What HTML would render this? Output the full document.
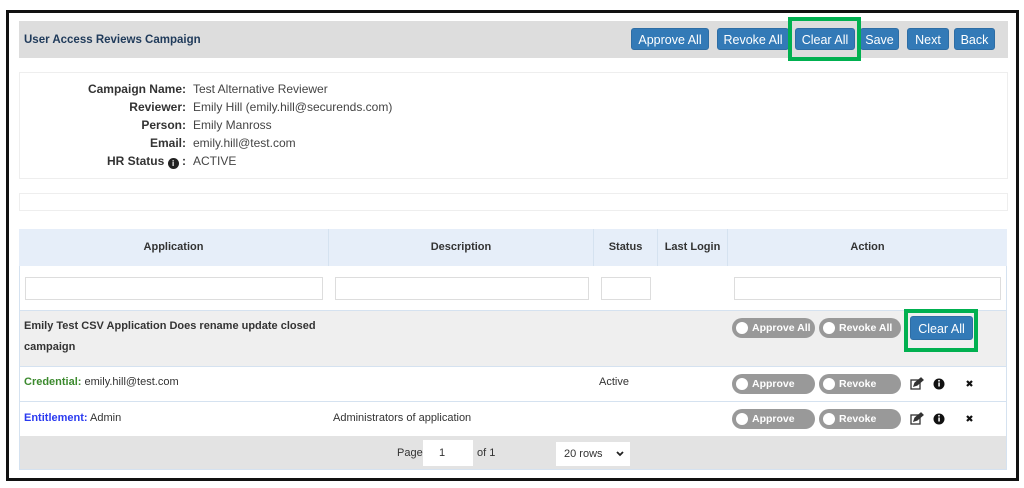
<!DOCTYPE html>
<html><head><style>
*{box-sizing:border-box;margin:0;padding:0}
body{width:1024px;height:488px;background:#fff;font-family:"Liberation Sans",sans-serif;font-size:12px;color:#333;position:relative;overflow:hidden}
.a{position:absolute}
.btn{position:absolute;background:#337ab7;color:#fff;border-radius:3px;font-size:12.5px;text-align:center;line-height:22px;height:22px;border:1px solid #2e6da4}
.g{position:absolute;border:4px solid #00b050}
.pill{position:absolute;background:#999;border-radius:11px;color:#fff;font-weight:bold;font-size:10.5px;line-height:20px;height:20px;padding-left:20px}
.pill:before{content:"";position:absolute;left:4px;top:4px;width:12px;height:12px;border-radius:50%;background:#fff}
.th{position:absolute;top:229px;height:37px;line-height:37px;text-align:center;font-weight:bold;font-size:11px;border-right:1px solid #d5e2f0}
.inp{position:absolute;background:#fff;border:1px solid #ddd;height:23px;top:277px}
.lab{position:absolute;right:838px;font-weight:bold;font-size:12px;color:#333}
.val{position:absolute;left:193px;font-size:12px;color:#444}
.hl{position:absolute;left:19px;width:988px;height:1px;background:#d5e2f0}
</style></head><body>
<div class="a" style="left:6px;top:10px;width:1013px;height:471px;border:3px solid #111"></div>
<div class="a" style="left:19px;top:21px;width:989px;height:37px;background:#ddd"></div>
<div class="a" style="left:24px;top:34px;font-weight:bold;font-size:11.5px;color:#1f3a5a">User Access Reviews Campaign</div>
<div class="btn" style="left:631px;top:28px;width:78px">Approve All</div>
<div class="btn" style="left:717px;top:28px;width:72px">Revoke All</div>
<div class="btn" style="left:795px;top:28px;width:60px">Clear All</div>
<div class="btn" style="left:860px;top:28px;width:39px">Save</div>
<div class="btn" style="left:907px;top:28px;width:42px">Next</div>
<div class="btn" style="left:954px;top:28px;width:41px">Back</div>
<div class="g" style="left:788px;top:17px;width:73px;height:44px"></div>

<div class="a" style="left:19px;top:72px;width:989px;height:107px;border:1px solid #eee"></div>
<div class="lab" style="top:82px">Campaign Name:</div><div class="val" style="top:82px">Test Alternative Reviewer</div>
<div class="lab" style="top:100px">Reviewer:</div><div class="val" style="top:100px">Emily Hill (emily.hill@securends.com)</div>
<div class="lab" style="top:118px">Person:</div><div class="val" style="top:118px">Emily Manross</div>
<div class="lab" style="top:136px">Email:</div><div class="val" style="top:136px">emily.hill@test.com</div>
<div class="lab" style="top:154px">HR Status <span style="display:inline-block;width:11px;height:11px;border-radius:50%;background:#222;color:#fff;font-size:8px;line-height:11px;text-align:center;vertical-align:-1px">i</span> :</div><div class="val" style="top:154px">ACTIVE</div>

<div class="a" style="left:19px;top:193px;width:989px;height:18px;border:1px solid #eee"></div>

<div class="a" style="left:19px;top:229px;width:988px;height:241px;border:1px solid #d5e2f0"></div>
<div class="a" style="left:19px;top:229px;width:988px;height:37px;background:#e6eef9"></div>
<div class="th" style="left:19px;width:310px">Application</div>
<div class="th" style="left:329px;width:265px">Description</div>
<div class="th" style="left:594px;width:64px">Status</div>
<div class="th" style="left:658px;width:70px">Last Login</div>
<div class="th" style="left:728px;width:279px;border:none">Action</div>
<div class="inp" style="left:25px;width:298px"></div>
<div class="inp" style="left:335px;width:254px"></div>
<div class="inp" style="left:601px;width:50px"></div>
<div class="inp" style="left:734px;width:267px"></div>
<div class="hl" style="top:310px"></div>
<div class="a" style="left:20px;top:311px;width:986px;height:55px;background:#efefef"></div>
<div class="a" style="left:24px;top:316px;width:300px;font-weight:bold;font-size:11px;line-height:21px;color:#333">Emily Test CSV Application Does rename update closed campaign</div>
<div class="pill" style="left:732px;top:318px;width:83px">Approve All</div>
<div class="pill" style="left:819px;top:318px;width:82px">Revoke All</div>
<div class="btn" style="left:910px;top:316px;width:63px;height:24px;line-height:24px">Clear All</div>
<div class="g" style="left:904px;top:309px;width:74px;height:43px"></div>
<div class="hl" style="top:366px"></div>
<div class="a" style="left:24px;top:376px;font-size:11px"><span style="color:#3c8a2e;font-weight:bold">Credential:</span> emily.hill@test.com</div>
<div class="a" style="left:599px;top:376px;font-size:11px">Active</div>
<div class="pill" style="left:732px;top:374px;width:83px">Approve</div>
<div class="pill" style="left:819px;top:374px;width:82px">Revoke</div>
<div class="hl" style="top:401px"></div>
<div class="a" style="left:24px;top:412px;font-size:11px"><span style="color:#2a3af0;font-weight:bold">Entitlement:</span> Admin</div>
<div class="a" style="left:333px;top:412px;font-size:11px">Administrators of application</div>
<div class="pill" style="left:732px;top:409px;width:83px">Approve</div>
<div class="pill" style="left:819px;top:409px;width:82px">Revoke</div>
<svg class="a" style="left:910px;top:377px" width="64" height="48" viewBox="0 0 64 48">
<g fill="none" stroke="#333" stroke-width="1.3"><rect x="1" y="3" width="9" height="9"/><path d="M4 9l1-3 6-5 2 2-6 5z" fill="#333"/></g>
<circle cx="29" cy="7" r="5.5" fill="#111"/><rect x="28.3" y="5.5" width="1.5" height="4" fill="#fff"/><circle cx="29" cy="3.8" r=".9" fill="#fff"/>
<path d="M57 4l5 5M62 4l-5 5" stroke="#111" stroke-width="2.2"/>
<g transform="translate(0,35)"><g fill="none" stroke="#333" stroke-width="1.3"><rect x="1" y="3" width="9" height="9"/><path d="M4 9l1-3 6-5 2 2-6 5z" fill="#333"/></g>
<circle cx="29" cy="7" r="5.5" fill="#111"/><rect x="28.3" y="5.5" width="1.5" height="4" fill="#fff"/><circle cx="29" cy="3.8" r=".9" fill="#fff"/>
<path d="M57 4l5 5M62 4l-5 5" stroke="#111" stroke-width="2.2"/></g>
</svg>
<div class="a" style="left:20px;top:436px;width:986px;height:33px;background:#e3e3e3"></div>
<div class="a" style="left:397px;top:447px;font-size:11px">Page</div>
<div class="a" style="left:423px;top:440px;width:50px;height:26px;background:#fff;font-size:11px;line-height:26px;padding-left:16px">1</div>
<div class="a" style="left:477px;top:447px;font-size:11px">of 1</div>
<div class="a" style="left:556px;top:442px;width:74px;height:24px;background:#fff;font-size:11px;line-height:24px;padding-left:8px">20 rows
<svg style="position:absolute;right:6px;top:9px" width="8" height="6" viewBox="0 0 8 6"><path d="M1 1l3 3 3-3" fill="none" stroke="#222" stroke-width="1.8"/></svg></div>
</body></html>
